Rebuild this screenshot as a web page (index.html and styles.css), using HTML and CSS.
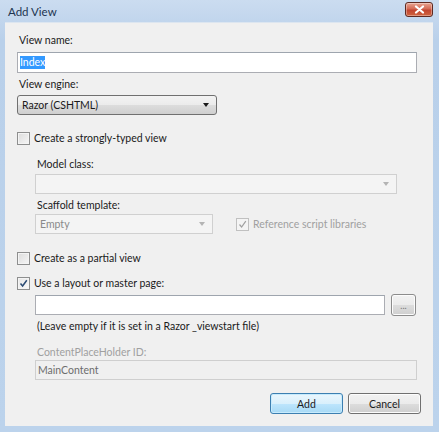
FILE: index.html
```html
<!DOCTYPE html>
<html>
<head>
<meta charset="utf-8">
<link rel="stylesheet" href="styles.css">
</head>
<body>
<div class="window">
  <div class="titlebar">
    <span class="title">Add View</span>
    <span class="close"><svg width="11" height="9" viewBox="0 0 11 9"><path d="M2 1.5 L9 7.5 M9 1.5 L2 7.5" stroke="#fff" stroke-width="2.2" stroke-linecap="round"/></svg></span>
  </div>
  <div class="client">
    <div class="label l-first">View name:</div>
    <div class="textbox w-full"><span class="sel">Index</span></div>
    <div class="label l-engine">View engine:</div>
    <div class="combo enabled w-engine"><span>Razor (CSHTML)</span><span class="arrow dark"></span></div>

    <label class="check row-typed"><span class="box"></span><span>Create a strongly-typed view</span></label>
    <div class="indent">
      <div class="label l-model">Model class:</div>
      <div class="combo disabled w-model"><span></span><span class="arrow"></span></div>
      <div class="label l-scaffold">Scaffold template:</div>
      <div class="scaffold-row">
        <div class="combo disabled w-scaffold"><span>Empty</span><span class="arrow"></span></div>
        <label class="check dis"><span class="box checked dis"><svg width="9" height="9" viewBox="0 0 9 9"><path d="M1.5 4.5 L3.6 7 L7.8 1.2" fill="none" stroke="#a0a0a0" stroke-width="1.2"/></svg></span><span>Reference script libraries</span></label>
      </div>
    </div>

    <label class="check row-partial"><span class="box"></span><span>Create as a partial view</span></label>
    <label class="check row-layout"><span class="box checked"><svg width="9" height="9" viewBox="0 0 9 9"><path d="M1.5 4.5 L3.6 7 L7.8 1.2" fill="none" stroke="#2c4c74" stroke-width="1.5"/></svg></span><span>Use a layout or master page:</span></label>
    <div class="indent">
      <div class="layout-row">
        <div class="textbox w-layout"></div>
        <div class="btn small">...</div>
      </div>
      <div class="label l-leave">(Leave empty if it is set in a Razor _viewstart file)</div>
      <div class="label gray l-cph">ContentPlaceHolder ID:</div>
      <div class="textbox disabled w-cph">MainContent</div>
    </div>

    <div class="buttons">
      <div class="btn default">Add</div>
      <div class="btn">Cancel</div>
    </div>
  </div>
</div>
</body>
</html>
```
FILE: styles.css
```css
html, body {
  margin: 0;
  padding: 0;
}
body {
  width: 439px;
  height: 432px;
  overflow: hidden;
  background: #c3d8ee;
  font-family: Lato, "Open Sans", sans-serif;
  font-size: 10.5px;
  color: #1a1a1a;
}
.window {
  width: 439px;
  height: 432px;
  display: flex;
  flex-direction: column;
  background: linear-gradient(#cbdcf0, #b9d0ea 40px, #bcd3ec);
}
.titlebar {
  height: 22px;
  display: flex;
  align-items: center;
  justify-content: space-between;
  padding: 0 6px 0 8px;
}
.title {
  color: #1c3450;
  font-size: 11.5px;
  margin-top: 1px;
}
.close {
  width: 26px;
  height: 13px;
  margin-top: -3px;
  border: 1px solid #5e2a22;
  border-radius: 3px;
  background: linear-gradient(#e8a592, #d46a55 45%, #c24530 55%, #d0653f);
  display: flex;
  align-items: center;
  justify-content: center;
  box-shadow: inset 0 0 0 1px rgba(255,255,255,0.35);
}
.client {
  flex: 1;
  margin: 0 6px 6px 5px;
  background: #f0f0f0;
  border-top: 1px solid #dde6f0;
  padding: 10px 0 0 12px;
  display: flex;
  flex-direction: column;
  position: relative;
}
.label {
  height: 14px;
  line-height: 14px;
  padding-left: 2px;
}
.gray { color: #a0a0a0; }
.l-first { margin-bottom: 5px; }
.l-engine { margin-top: 4px; margin-bottom: 4px; }
.textbox {
  box-sizing: border-box;
  height: 21px;
  border: 1px solid #abadb3;
  border-top-color: #9ea5ae;
  background: #fff;
  padding: 2px 2px;
  line-height: 15px;
}
.textbox.disabled {
  background: #f0f0f0;
  border-color: #cfcfcf;
  color: #6d6d6d;
}
.sel {
  background: #3399ff;
  color: #fff;
  padding: 0 0 1px 0;
}
.w-full { width: 400px; }
.combo {
  box-sizing: border-box;
  height: 20px;
  display: flex;
  align-items: center;
  justify-content: space-between;
  padding: 0 7px 0 4px;
}
.combo.enabled {
  border: 1px solid #707070;
  border-radius: 3px;
  background: linear-gradient(#f3f3f3, #ebebeb 50%, #dddddd 50%, #cfcfcf);
}
.combo.disabled {
  border: 1px solid #d0d0d0;
  background: #f4f4f4;
  color: #8a8a8a;
}
.arrow {
  width: 0;
  height: 0;
  border-left: 3.5px solid transparent;
  border-right: 3.5px solid transparent;
  border-top: 4px solid #b4b4b4;
}
.arrow.dark { border-top-color: #1a1a1a; }
.w-engine { width: 200px; }
.w-model { width: 362px; }
.w-scaffold { width: 178px; }

.check {
  display: flex;
  align-items: center;
  height: 14px;
}
.box {
  box-sizing: border-box;
  width: 13px;
  height: 13px;
  border: 1px solid #8e8f8f;
  background: linear-gradient(135deg, #dcdcdc, #f6f6f6);
  margin-right: 4px;
  display: flex;
  align-items: center;
  justify-content: center;
  box-shadow: inset 0 0 0 1px #f4f4f4;
}
.box.checked { background: linear-gradient(135deg, #e6e6e6, #fafafa); }
.box.dis { border-color: #c0c0c0; background: #f4f4f4; }
.check.dis { color: #a0a0a0; }
.row-typed { margin-top: 16px; }
.indent { padding-left: 18px; display: flex; flex-direction: column; }
.l-model { margin-top: 12px; margin-bottom: 3px; }
.l-scaffold { margin-top: 4px; margin-bottom: 2px; }
.scaffold-row {
  display: flex;
  align-items: center;
  gap: 23px;
}
.row-partial { margin-top: 17px; }
.row-layout { margin-top: 11px; }
.layout-row {
  margin-top: 4px;
  display: flex;
  align-items: center;
  gap: 6px;
}
.w-layout { width: 350px; height: 20px; }
.btn {
  box-sizing: border-box;
  width: 73px;
  height: 21px;
  border: 1px solid #707070;
  border-radius: 3px;
  background: linear-gradient(#f2f2f2, #ebebeb 50%, #dddddd 50%, #cfcfcf);
  display: flex;
  align-items: center;
  justify-content: center;
  box-shadow: inset 0 0 0 1px #fcfcfc;
}
.btn.small {
  width: 25px;
  height: 22px;
  color: #777;
  font-size: 9px;
  border-color: #8c8c8c;
}
.btn.default {
  border-color: #3c7fb1;
  background: linear-gradient(#eaf6fd, #d9f0fc 50%, #bee6fd 50%, #a7d9f5);
  box-shadow: inset 0 0 0 1px #c7ebfd;
}
.l-leave { margin-top: 3px; }
.l-cph { margin-top: 12px; margin-bottom: 1px; }
.w-cph { width: 382px; height: 20px; }
.buttons {
  display: flex;
  justify-content: flex-end;
  gap: 5px;
  margin-top: 13px;
  padding-right: 12px;
}
```
